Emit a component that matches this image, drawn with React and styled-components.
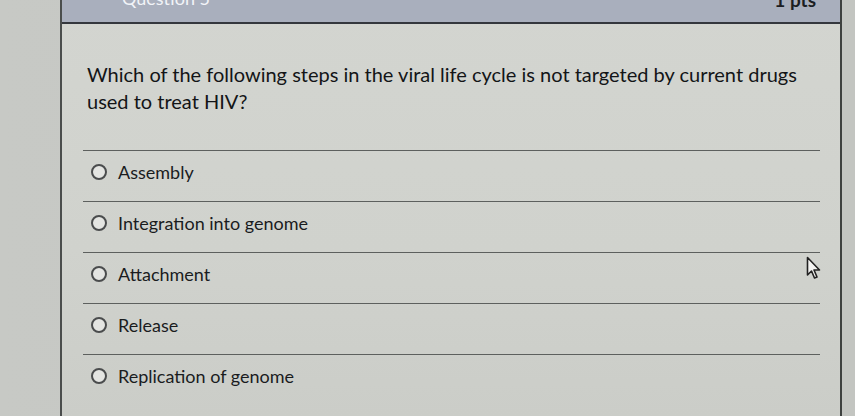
import React from 'react';
import styled, { createGlobalStyle } from 'styled-components';

const GlobalStyle = createGlobalStyle`
  html, body {
    margin: 0;
    padding: 0;
    background: #c4c6c2;
    font-family: Lato, "Open Sans", "Liberation Sans", sans-serif;
    overflow: hidden;
  }
`;

const SPage = styled.div`
  display: flex;
  width: 855px;
  height: 416px;
  background: linear-gradient(90deg, #c7c9c5 0%, #c3c5c1 100%);
`;

const SGutter = styled.div`
  width: 60px;
  flex-shrink: 0;
`;

const SCard = styled.div`
  width: 778px;
  flex-shrink: 0;
  height: 416px;
  border-left: 2px solid #4a4d4c;
  border-right: 2px solid #3e413f;
  background: linear-gradient(180deg, #d3d5d0 0%, #d0d2cd 60%, #cbcdc8 100%);
  display: flex;
  flex-direction: column;
  position: relative;
`;

const SHeader = styled.div`
  height: 22px;
  background: #a9afbd;
  border-bottom: 2px solid #34373d;
  display: flex;
  justify-content: space-between;
  align-items: flex-end;
  padding: 0 24px 0 60px;
  overflow: hidden;
`;

const SHeaderTitle = styled.div`
  color: #f2f4f8;
  font-size: 18px;
  line-height: 18px;
  margin-bottom: 15px;
`;

const SPoints = styled.div`
  color: #1c1e22;
  font-size: 19px;
  font-weight: 700;
  line-height: 19px;
  margin-bottom: 13px;
`;

const SQuestion = styled.p`
  margin: 37px 30px 0 25px;
  font-size: 20px;
  line-height: 27px;
  color: #131517;
`;

const SOptions = styled.div`
  margin: 35px 20px 0 21px;
  display: flex;
  flex-direction: column;
`;

const SOption = styled.label`
  height: 40px;
  padding: 10px 0 0 8px;
  border-top: 1px solid #5d605e;
  display: flex;
  align-items: flex-start;
  gap: 11px;
  font-size: 18px;
  line-height: 22px;
  color: #1a1c1e;
`;

const SRadio = styled.span`
  width: 12px;
  height: 12px;
  margin-top: 3px;
  border-radius: 50%;
  border: 2px solid #4a4c4d;
  background: #e4e5e2;
  flex-shrink: 0;
`;

const SCursor = styled.svg`
  position: absolute;
  left: 744px;
  top: 256px;
`;

const OPTIONS = [
  'Assembly',
  'Integration into genome',
  'Attachment',
  'Release',
  'Replication of genome',
];

export default function App() {
  return (
    <>
      <GlobalStyle />
      <SPage>
        <SGutter />
        <SCard>
          <SHeader>
            <SHeaderTitle>Question 5</SHeaderTitle>
            <SPoints>1 pts</SPoints>
          </SHeader>
          <SQuestion>
            Which of the following steps in the viral life cycle is not targeted by current drugs
            <br />
            used to treat HIV?
          </SQuestion>
          <SOptions>
            {OPTIONS.map((opt) => (
              <SOption key={opt}>
                <SRadio />
                {opt}
              </SOption>
            ))}
          </SOptions>
          <SCursor width="16" height="24" viewBox="0 0 16 24">
            <path
              d="M1.5 1.5 L1.5 19 L5.5 15 L8.5 22 L11 21 L8 14 L13.5 14 Z"
              fill="#f4f4f2"
              stroke="#222"
              strokeWidth="1.6"
              strokeLinejoin="round"
            />
          </SCursor>
        </SCard>
      </SPage>
    </>
  );
}
